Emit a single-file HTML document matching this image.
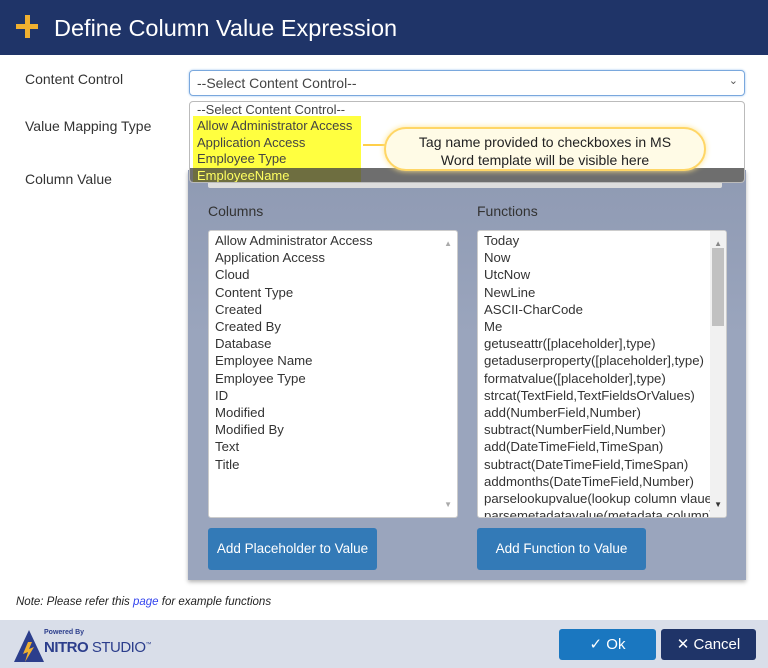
<!DOCTYPE html>
<html><head><style>
*{box-sizing:border-box;margin:0;padding:0}
body{width:768px;height:668px;overflow:hidden;background:#fff;font-family:"Liberation Sans",Arial,sans-serif;position:relative;color:#333}
.hdr{position:absolute;left:0;top:0;width:768px;height:55px;background:#1f3468}
.hdr .t{position:absolute;left:54px;top:15px;color:#fff;font-size:23.5px}
.plus1{position:absolute;left:16px;top:24px;width:22px;height:5px;background:#f0b030}
.plus2{position:absolute;left:24.5px;top:15px;width:5px;height:23px;background:#f0b030}
.lbl{position:absolute;left:25px;font-size:14px;color:#333}
.sel{position:absolute;left:189px;top:70px;width:556px;height:26px;border:1px solid #7aa8dd;border-radius:4px;font-size:14px;padding:4px 7px;color:#444;box-shadow:0 0 2px #9cc3ee}
.panel{position:absolute;left:188px;top:170px;width:558px;height:410px;background:linear-gradient(#8f9ab3,#9aa5bd 40%,#9aa5bd);box-shadow:0 2px 4px rgba(0,0,0,.3)}
.dd{position:absolute;left:189px;top:101px;width:556px;height:82px;background:#fff;border:1px solid #bbb;border-radius:4px;overflow:hidden;font-size:13px}
.dd .band{position:absolute;left:0;top:66px;width:556px;height:16px;background:#6e6e6e}
.hl{position:absolute;left:3px;top:14px;width:168px;height:68px;background:#ffff40}
.hl2{position:absolute;left:3px;top:66px;width:168px;height:16px;background:#6e6e40}
.opt{position:absolute;left:7px;color:#444}
.bubble{position:absolute;left:384px;top:127px;width:322px;height:44px;background:#fffbe6;border:2px solid #ffd666;border-radius:22px;text-align:center;font-size:14px;line-height:18px;padding-top:4px;color:#222;box-shadow:0 0 6px #ffe58f}
.ptr{position:absolute;left:363px;top:144px;width:22px;height:2px;background:#ffcf4a}
.coltitle{position:absolute;font-size:14px;color:#333}
.list{position:absolute;background:#fff;border:1px solid #ccc;border-radius:3px;font-size:13.2px;line-height:17.2px;padding:1px 6px;overflow:hidden;color:#333}
.btn{position:absolute;height:42px;background:#337ab7;color:#fff;font-size:13.5px;border-radius:3px;text-align:center;line-height:42px}
.foot{position:absolute;left:0;top:620px;width:768px;height:48px;background:#d9dee9}
</style></head><body>
<div class="hdr"><div class="plus1"></div><div class="plus2"></div><div class="t">Define Column Value Expression</div></div>
<div class="lbl" style="top:71px">Content Control</div>
<div class="lbl" style="top:118px">Value Mapping Type</div>
<div class="lbl" style="top:171px">Column Value</div>
<div class="sel">--Select Content Control--<span style="position:absolute;right:6px;top:3px;font-size:11px;color:#555">&#8964;</span></div>
<div class="panel">
<div style="position:absolute;left:20px;top:4px;width:514px;height:14px;background:#ddd;border-radius:2px"></div>
</div>
<div class="coltitle" style="left:208px;top:203px">Columns</div>
<div class="coltitle" style="left:477px;top:203px">Functions</div>
<div class="list" style="left:208px;top:230px;width:250px;height:288px">Allow Administrator Access<br>Application Access<br>Cloud<br>Content Type<br>Created<br>Created By<br>Database<br>Employee Name<br>Employee Type<br>ID<br>Modified<br>Modified By<br>Text<br>Title
<span style="position:absolute;right:5px;top:4px;font-size:8px;color:#aaa">&#9650;</span><span style="position:absolute;right:5px;bottom:4px;font-size:8px;color:#aaa">&#9660;</span></div>
<div class="list" style="left:477px;top:230px;width:250px;height:288px;white-space:nowrap">Today<br>Now<br>UtcNow<br>NewLine<br>ASCII-CharCode<br>Me<br>getuseattr([placeholder],type)<br>getaduserproperty([placeholder],type)<br>formatvalue([placeholder],type)<br>strcat(TextField,TextFieldsOrValues)<br>add(NumberField,Number)<br>subtract(NumberField,Number)<br>add(DateTimeField,TimeSpan)<br>subtract(DateTimeField,TimeSpan)<br>addmonths(DateTimeField,Number)<br>parselookupvalue(lookup column vlaue)<br>parsemetadatavalue(metadata column)
<div style="position:absolute;right:0;top:0;width:16px;height:288px;background:#f1f1f1"></div>
<div style="position:absolute;right:2px;top:17px;width:12px;height:78px;background:#c1c1c1"></div>
<span style="position:absolute;right:4px;top:4px;font-size:8px;color:#888">&#9650;</span><span style="position:absolute;right:4px;bottom:4px;font-size:8px;color:#333">&#9660;</span></div>
<div class="btn" style="left:208px;top:528px;width:169px">Add Placeholder to Value</div>
<div class="btn" style="left:477px;top:528px;width:169px">Add Function to Value</div>
<div class="dd"><div class="band"></div><div class="hl"></div><div class="hl2"></div>
<div class="opt" style="top:0">--Select Content Control--</div>
<div class="opt" style="top:16px">Allow Administrator Access</div>
<div class="opt" style="top:33px">Application Access</div>
<div class="opt" style="top:49px">Employee Type</div>
<div class="opt" style="top:66px;color:#ffff60">EmployeeName</div>
</div>
<div class="ptr"></div>
<div class="bubble">Tag name provided to checkboxes in MS<br>Word template will be visible here</div>
<div style="position:absolute;left:16px;top:596px;font-size:11.5px;font-style:italic;color:#222">Note: Please refer this <span style="color:#3344ee">page</span> for example functions</div>
<div class="foot">
<svg style="position:absolute;left:14px;top:10px" width="30" height="32" viewBox="0 0 30 32"><polygon points="15,0 30,32 0,32" fill="#2c3e8c"/><polygon points="14,12 9,24 14,22 11,32 20,17 15,19 18,12" fill="#f0b030"/></svg>
<div style="position:absolute;left:44px;top:9px;font-size:7px;font-weight:bold;color:#2c3e8c">Powered By</div>
<div style="position:absolute;left:44px;top:19px;font-size:15px;color:#2c3e8c;letter-spacing:-0.5px"><b>NITRO</b> STUDIO<sup style="font-size:6px">™</sup></div>
<div style="position:absolute;left:559px;top:9px;width:97px;height:31px;background:#1a77c0;border-radius:3px;color:#fff;font-size:15px;text-align:center;line-height:31px">✓ Ok</div>
<div style="position:absolute;left:661px;top:9px;width:95px;height:31px;background:#1f3468;border-radius:3px;color:#fff;font-size:15px;text-align:center;line-height:31px">✕ Cancel</div>
</div>
</body></html>
